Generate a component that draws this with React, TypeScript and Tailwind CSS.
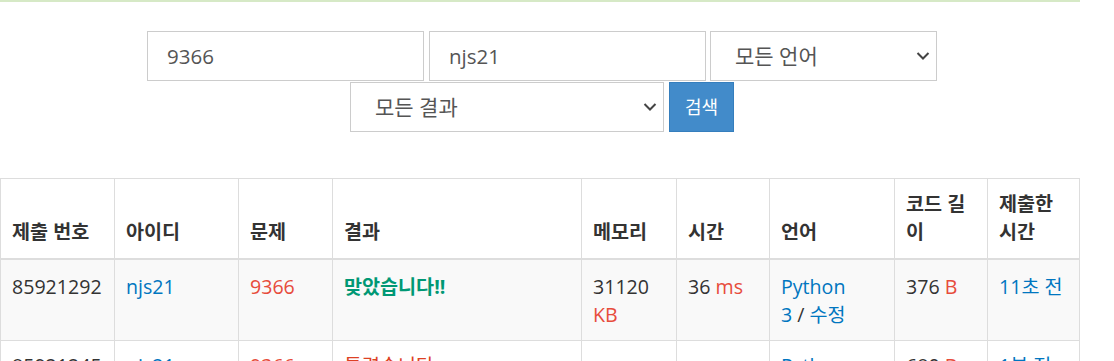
import React from 'react';

const font = { fontFamily: '"Open Sans", "Noto Sans CJK KR", sans-serif' };

const Chevron = () => (
  <svg width="14" height="9" viewBox="0 0 14 9" className="pointer-events-none absolute right-[6px] top-1/2 -translate-y-1/2">
    <path d="M1.5 1.5 L7 7 L12.5 1.5" fill="none" stroke="#444" strokeWidth="2" />
  </svg>
);

const SelectBox = ({ label, width }: { label: string; width: string }) => (
  <div className={`relative h-[50px] ${width} border border-[#ccc] bg-white`}>
    <div className="pl-[24px] leading-[48px] text-[21px] text-[#555]">{label}</div>
    <Chevron />
  </div>
);

const cols = ['w-[114px]', 'w-[124px]', 'w-[94px]', 'w-[249px]', 'w-[95px]', 'w-[93px]', 'w-[125px]', 'w-[93px]', 'w-[92px]'];
const headers = ['제출 번호', '아이디', '문제', '결과', '메모리', '시간', '언어', '코드 길이', '제출한 시간'];

const td = 'border border-[#ddd] px-[11px] pt-[13px] pb-[11px]';
const td2 = 'border border-[#ddd] px-[11px] pt-[11px] pb-[11px]';

const App: React.FC = () => {
  return (
    <div className="min-h-screen bg-white text-[#333]" style={font}>
      <div className="w-[1080px] h-[2px] bg-[#d6e9c6]" />

      {/* search form */}
      <div className="w-[1084px] pt-[29px]">
        <div className="flex justify-center">
          <div className="w-[277px] h-[50px] border border-[#ccc] pl-[19px] leading-[48px] text-[20.5px] text-[#555]">9366</div>
          <div className="ml-[5px] w-[277px] h-[50px] border border-[#ccc] pl-[19px] leading-[48px] text-[20.5px] text-[#555]">njs21</div>
          <div className="ml-[4px]"><SelectBox label="모든 언어" width="w-[227px]" /></div>
        </div>
        <div className="flex justify-center mt-[1px]">
          <SelectBox label="모든 결과" width="w-[314px]" />
          <button className="ml-[5px] w-[65px] h-[50px] bg-[#428bca] border border-[#357ebd] text-white text-[18px]">검색</button>
        </div>
      </div>

      {/* status table */}
      <table className="mt-[46px] w-[1080px] table-fixed border-collapse text-[19.6px] leading-[28px]">
        <colgroup>
          {cols.map((c, i) => <col key={i} className={c} />)}
        </colgroup>
        <thead>
          <tr>
            {headers.map(h => (
              <th key={h} className="border border-[#ddd] border-b-2 px-[11px] pt-[11px] pb-[12px] text-left align-bottom font-bold">{h}</th>
            ))}
          </tr>
        </thead>
        <tbody>
          <tr className="bg-[#f9f9f9] align-top">
            <td className={td}>85921292</td>
            <td className={`${td} text-[#0076c0]`}>njs21</td>
            <td className={`${td} text-[#e74c3c]`}>9366</td>
            <td className={`${td} font-bold text-[#009874]`}>맞았습니다!!</td>
            <td className={td}>31120 <span className="text-[#e74c3c]">KB</span></td>
            <td className={td}>36 <span className="text-[#e74c3c]">ms</span></td>
            <td className={td}><span className="text-[#0076c0]">Python<br />3</span> / <span className="text-[#0076c0]">수정</span></td>
            <td className={td}>376 <span className="text-[#e74c3c]">B</span></td>
            <td className={`${td} text-[#0076c0]`}>11초 전</td>
          </tr>
          <tr className="bg-white align-top">
            <td className={td2}>85921245</td>
            <td className={`${td2} text-[#0076c0]`}>njs21</td>
            <td className={`${td2} text-[#e74c3c]`}>9366</td>
            <td className={`${td2} text-[#dd4124]`}>틀렸습니다</td>
            <td className={td2}></td>
            <td className={td2}></td>
            <td className={td2}><span className="text-[#0076c0]">Python<br />3</span> / <span className="text-[#0076c0]">수정</span></td>
            <td className={td2}>680 <span className="text-[#e74c3c]">B</span></td>
            <td className={`${td2} text-[#0076c0]`}>1분 전</td>
          </tr>
        </tbody>
      </table>
    </div>
  );
};

export default App;
